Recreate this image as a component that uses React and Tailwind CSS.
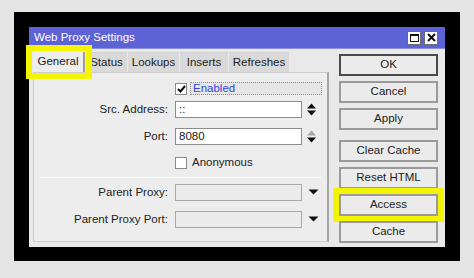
import React from 'react'

const font = { fontFamily: '"Liberation Sans", Arial, sans-serif' }

function Spinner({ upDisabled }) {
  return (
    <svg width="11" height="13" viewBox="0 0 11 13" className="ml-[4px]">
      <path d="M1 5.5 L5.5 0.5 L10 5.5 Z" fill={upDisabled ? '#a8a8a8' : '#111'} />
      <path d="M1 7.5 L5.5 12.5 L10 7.5 Z" fill="#111" />
    </svg>
  )
}

function DropArrow() {
  return (
    <svg width="11" height="6" viewBox="0 0 11 6" className="ml-[6px]">
      <path d="M0.5 0.5 L10.5 0.5 L5.5 5.5 Z" fill="#111" />
    </svg>
  )
}

function Checkbox({ checked }) {
  return (
    <div className="w-[12px] h-[12px] bg-white border border-[#8a8a8a] flex items-center justify-center">
      {checked && (
        <svg width="9" height="8" viewBox="0 0 9 8">
          <path d="M1 4 L3.5 6.5 L8 1" stroke="#111" strokeWidth="2" fill="none" />
        </svg>
      )}
    </div>
  )
}

function Field({ label, value, disabled, spinner, upDisabled, dropdown, className }) {
  return (
    <div className={`flex items-center ${className}`}>
      <div className="w-[141px] text-right text-[11.5px] text-[#222] pr-[7px]">{label}</div>
      <div
        className={`w-[127px] h-[17px] border flex items-center px-[3px] text-[11.5px] text-[#222] ${
          disabled ? 'bg-[#ececec] border-[#a9a9a9]' : 'bg-white border-[#8c8c8c]'
        }`}
      >
        {value}
      </div>
      {spinner && <Spinner upDisabled={upDisabled} />}
      {dropdown && <DropArrow />}
    </div>
  )
}

function Btn({ children, primary, highlight, className = '' }) {
  return (
    <div
      className={`h-[22px] flex items-center justify-center bg-[#ebebeb] text-[11.5px] text-[#1c1c1c] ${
        primary ? 'border-2 border-[#4a4a4a]' : 'border-2 border-[#9a9a9a]'
      } ${highlight ? 'outline-[6px] outline-solid outline-[#f4f400] outline-offset-0' : ''} ${className}`}
    >
      {children}
    </div>
  )
}

const tabs = [
  { name: 'General', w: 'w-[52px]' },
  { name: 'Status', w: 'w-[41px]' },
  { name: 'Lookups', w: 'w-[51px]' },
  { name: 'Inserts', w: 'w-[48px]' },
  { name: 'Refreshes', w: 'w-[60px]' }
]

export default function App() {
  return (
    <div className="w-[474px] h-[278px] bg-[#e4e4e4] pt-[12px] pl-[14px]" style={font}>
      <div className="w-[446px] h-[249px] bg-black pt-[15px] pl-[15px]">
        <div className="w-[416px] h-[220px] bg-[#e9e9e9] flex flex-col">
          {/* title bar */}
          <div className="h-[22px] bg-[#5d63d4] flex items-center justify-between pl-[5px] pr-[7px] border-b border-[#8a8fe0]">
            <span className="text-white text-[11.5px]">Web Proxy Settings</span>
            <div className="flex gap-[3px]">
              <div className="w-[14px] h-[14px] bg-white border border-[#6b6b6b] flex items-center justify-center">
                <div className="w-[9px] h-[8px] border border-[#111] border-t-2" />
              </div>
              <div className="w-[14px] h-[14px] bg-white border border-[#6b6b6b] flex items-center justify-center">
                <svg width="9" height="9" viewBox="0 0 9 9">
                  <path d="M1 1 L8 8 M8 1 L1 8" stroke="#111" strokeWidth="2" />
                </svg>
              </div>
            </div>
          </div>

          <div className="flex flex-1">
            {/* left: tabs + panel */}
            <div className="w-[300px] pl-[4px] pt-[3px] pb-[5px] flex flex-col">
              <div className="flex gap-[1px] h-[20px]">
                {tabs.map((t, i) => (
                  <div
                    key={t.name}
                    className={`${t.w} h-[20px] flex items-center justify-center text-[11.5px] text-[#1c1c1c] ${
                      i === 0
                        ? 'bg-[#ededed] border-r-2 border-[#9c9c9c] outline-[6px] outline-solid outline-[#f4f400] outline-offset-[1px] relative z-10'
                        : 'bg-[#d9d9d9] border-t border-[#cfcfcf]'
                    }`}
                  >
                    {t.name}
                  </div>
                ))}
              </div>

              <div className="flex-1 bg-[#ededed] border border-[#cdcdcd] border-r-2 border-r-[#a6a6a6] flex flex-col">
                {/* Enabled */}
                <div className="flex items-center mt-[9px] h-[13px] pl-[141px]">
                  <Checkbox checked />
                  <div className="ml-[3px] w-[132px] h-[13px] border border-dotted border-[#8f8f8f] bg-[#e6e6e6] flex items-center pl-[2px] text-[11.5px] text-[#3347e0]">
                    Enabled
                  </div>
                </div>

                <Field className="mt-[6px]" label="Src. Address:" value="::" spinner />
                <Field className="mt-[10px]" label="Port:" value="8080" spinner upDisabled />

                <div className="flex items-center mt-[11px] h-[12px] pl-[141px]">
                  <Checkbox />
                  <span className="ml-[5px] text-[11.5px] text-[#222]">Anonymous</span>
                </div>

                <div className="mt-[8px] mx-[6px] h-[1px] bg-[#d4d4d4] border-b border-white" />

                <Field className="mt-[6px]" label="Parent Proxy:" value="" disabled dropdown />
                <Field className="mt-[10px]" label="Parent Proxy Port:" value="" disabled dropdown />
              </div>
            </div>

            {/* right: buttons */}
            <div className="w-[99px] ml-[10px] pt-[5px] flex flex-col gap-[5px]">
              <Btn primary>OK</Btn>
              <Btn>Cancel</Btn>
              <Btn>Apply</Btn>
              <Btn className="mt-[5px]">Clear Cache</Btn>
              <Btn>Reset HTML</Btn>
              <Btn highlight>Access</Btn>
              <Btn>Cache</Btn>
            </div>
          </div>
        </div>
      </div>
    </div>
  )
}
